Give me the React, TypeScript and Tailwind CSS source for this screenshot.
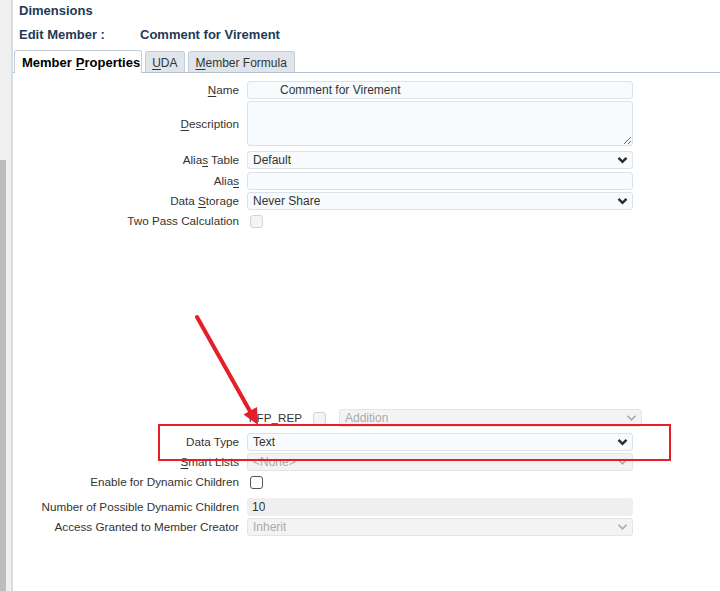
import React from "react";

const Chevron: React.FC<{ disabled?: boolean }> = ({ disabled }) => (
  <svg width="11" height="8" viewBox="0 0 11 8" className="shrink-0">
    <path
      d="M1.5 1.8 L5.5 5.8 L9.5 1.8"
      fill="none"
      stroke={disabled ? "#a9a9a9" : "#2b2b2b"}
      strokeWidth={disabled ? 1.6 : 2.4}
    />
  </svg>
);

const Label: React.FC<{ children: React.ReactNode }> = ({ children }) => (
  <div className="w-[226px] shrink-0 text-right text-[11.7px] leading-[16px] text-[#333]">{children}</div>
);

const Field: React.FC<{
  value?: string;
  select?: boolean;
  disabled?: boolean;
  muted?: boolean;
  className?: string;
}> = ({ value, select, disabled, muted, className }) => (
  <div
    className={`flex h-[18px] items-center justify-between rounded-[3px] pl-[5px] pr-[4px] text-[12px] ${
      muted
        ? "bg-[#efefef] text-[#333]"
        : disabled
        ? "border border-[#e4e4e4] bg-[#f3f3f3] text-[#ababab]"
        : "border border-[#dde2e7] bg-[#f7fbfd] text-[#333]"
    } ${className ?? "ml-2 w-[386px]"}`}>
    <span className="truncate leading-[16px]">{value}</span>
    {select && <Chevron disabled={disabled} />}
  </div>
);

const CheckBox: React.FC<{ disabled?: boolean; className?: string }> = ({ disabled, className }) => (
  <div
    className={`h-[13px] w-[13px] rounded-[3px] ${
      disabled ? "border border-[#d3d3d3] bg-[#f4f4f4]" : "border-[1.5px] border-[#555] bg-white"
    } ${className ?? "ml-[11px]"}`}
  />
);

export default function App() {
  return (
    <div className="relative flex h-[591px] w-[720px] overflow-hidden bg-white font-['Liberation_Sans',Arial,sans-serif]">
      {/* scrollbar strip */}
      <div className="flex w-[11px] shrink-0 flex-col bg-[#f0f0f0]">
        <div className="h-[160px]" />
        <div className="w-[6px] flex-1 bg-[#bdbdbd]" />
      </div>
      <div className="w-[2px] shrink-0 bg-[#d6dde5]" />

      <main className="flex flex-1 flex-col">
        {/* header */}
        <div className="pl-[6px] pt-[3px] text-[13px] font-bold leading-[16px] text-[#1d3a58]">Dimensions</div>
        <div className="mt-[8px] flex pl-[6px] text-[13px] font-bold leading-[16px] text-[#1d3a58]">
          <span className="w-[121px]">Edit Member :</span>
          <span>Comment for Virement</span>
        </div>

        {/* tabs */}
        <div className="mt-[7px] flex h-[23px] items-end border-b border-[#b6c3cf]">
          <div className="-mb-px ml-[1px] flex h-[23px] items-center rounded-t-[3px] border border-b-0 border-[#c3cdd7] bg-white pl-[7px] pr-[1px] pt-[1px] text-[13px] font-bold text-black">
            Member <span className="ml-[4px] underline underline-offset-2">P</span>roperties
          </div>
          <div className="ml-[3px] flex h-[21px] items-center rounded-t-[3px] border border-b-0 border-[#c3cdd7] bg-[#dfe5eb] px-[6px] pt-[1px] text-[12px] text-[#333]">
            <span className="underline underline-offset-2">U</span>DA
          </div>
          <div className="ml-[3px] flex h-[21px] items-center rounded-t-[3px] border border-b-0 border-[#c3cdd7] bg-[#dfe5eb] px-[7px] pt-[1px] text-[12px] text-[#333]">
            <span className="underline underline-offset-2">M</span>ember Formula
          </div>
        </div>

        {/* form */}
        <div className="flex flex-col pt-[8px]">
          <div className="flex h-[18px] items-center">
            <Label>
              <span className="underline underline-offset-2">N</span>ame
            </Label>
            <Field value="Comment for Virement" className="ml-2 w-[386px] !pl-[32px]" />
          </div>

          <div className="mt-[2px] flex h-[45px] items-center">
            <Label>
              <span className="underline underline-offset-2">D</span>escription
            </Label>
            <textarea
              readOnly
              className="ml-2 h-[45px] w-[386px] rounded-[3px] border border-[#dde2e7] bg-[#f7fbfd] text-[12px] outline-none"
            />
          </div>

          <div className="mt-[5px] flex h-[18px] items-center">
            <Label>
              Alia<span className="underline underline-offset-2">s</span> Table
            </Label>
            <Field value="Default" select />
          </div>

          <div className="mt-[3px] flex h-[18px] items-center">
            <Label>
              Alia<span className="underline underline-offset-2">s</span>
            </Label>
            <Field />
          </div>

          <div className="mt-[2px] flex h-[18px] items-center">
            <Label>
              Data <span className="underline underline-offset-2">S</span>torage
            </Label>
            <Field value="Never Share" select />
          </div>

          <div className="mt-[3px] flex h-[16px] items-center">
            <Label>Two Pass Calculation</Label>
            <CheckBox disabled />
          </div>

          <div className="mt-[180px] flex h-[18px] items-center">
            <div className="w-[289px] shrink-0 text-right text-[11.7px] leading-[16px] text-[#333]">PFP_REP</div>
            <CheckBox disabled />
            <Field value="Addition" select disabled className="ml-[13px] w-[303px]" />
          </div>

          <div className="mt-[6px] flex h-[18px] items-center">
            <Label>Data Type</Label>
            <Field value="Text" select />
          </div>

          <div className="mt-[2px] flex h-[18px] items-center">
            <Label>
              <span className="underline underline-offset-2">S</span>mart Lists
            </Label>
            <Field value="<None>" select disabled />
          </div>

          <div className="mt-[3px] flex h-[16px] items-center">
            <Label>Enable for Dynamic Children</Label>
            <CheckBox />
          </div>

          <div className="mt-[8px] flex h-[18px] items-center">
            <Label>Number of Possible Dynamic Children</Label>
            <Field value="10" muted />
          </div>

          <div className="mt-[2px] flex h-[18px] items-center">
            <Label>Access Granted to Member Creator</Label>
            <Field value="Inherit" select disabled />
          </div>
        </div>
      </main>

      {/* annotation overlay */}
      <div className="pointer-events-none absolute left-[158px] top-[424px] h-[37px] w-[513px] border-2 border-[#e61e28]" />
      <svg className="pointer-events-none absolute left-0 top-0" width="720" height="591">
        <line x1="197" y1="317" x2="251" y2="413" stroke="#e61e28" strokeWidth="4" strokeLinecap="round" />
        <polygon points="258,425 243.5,414.5 257,407" fill="#e61e28" />
      </svg>
    </div>
  );
}
